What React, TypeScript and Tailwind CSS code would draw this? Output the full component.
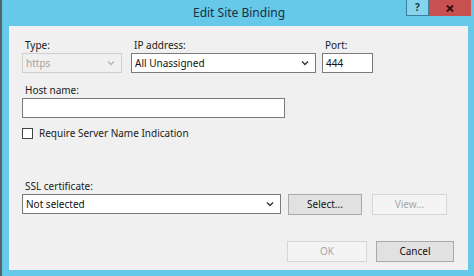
import React from "react";

const font = { fontFamily: '"Noto Sans", "Open Sans", sans-serif' };

function Chevron({ disabled }: { disabled?: boolean }) {
  return (
    <svg width="8" height="6" viewBox="0 0 8 6" className="shrink-0">
      <polyline
        points="1,1.5 4,4.5 7,1.5"
        fill="none"
        stroke={disabled ? "#b4b4b4" : "#333"}
        strokeWidth="1.4"
      />
    </svg>
  );
}

function Label({ children }: { children: React.ReactNode }) {
  return <div className="h-[14px] pl-[3px] text-[10px] leading-[14px] text-[#1a1a1a]">{children}</div>;
}

function Combo({ value, w, disabled }: { value: string; w: string; disabled?: boolean }) {
  return (
    <div
      className={`mt-[1px] flex h-[20px] ${w} items-center justify-between border pl-[3px] pr-[6px] text-[10px] ${
        disabled ? "border-[#cfcfcf] bg-[#f0f0f0] text-[#a3a3a3]" : "border-[#7a7a7a] bg-white text-[#111]"
      }`}
    >
      <span>{value}</span>
      <Chevron disabled={disabled} />
    </div>
  );
}

function Button({ children, w, disabled }: { children: React.ReactNode; w: string; disabled?: boolean }) {
  return (
    <div
      className={`flex h-[21px] ${w} items-center justify-center border text-[10px] ${
        disabled ? "border-[#d6d6d6] bg-[#f4f4f4] text-[#a8a8a8]" : "border-[#a9a9a9] bg-[#e1e1e1] text-[#111]"
      }`}
    >
      {children}
    </div>
  );
}

export default function App() {
  return (
    <div style={font} className="flex h-[276px] w-[474px] flex-col border-l-2 border-[#56646a] bg-[#66c9e9]">
      {/* title bar */}
      <div className="relative flex h-[26px] items-center justify-center">
        <span className="pb-[1px] pl-[2px] text-[12px] text-[#1c2f3c]">Edit Site Binding</span>
        <div className="absolute right-[3px] top-0 flex">
          <div className="flex h-[16px] w-[23px] items-center justify-center border border-t-0 border-[#3a7f9e] bg-[#86d3ee] text-[10px] font-bold text-[#15384a]">
            ?
          </div>
          <div className="flex h-[16px] w-[42px] items-center justify-center bg-[#c75050]">
            <svg width="8" height="7" viewBox="0 0 8 7">
              <path d="M1 0.5 L7 6.5 M7 0.5 L1 6.5" stroke="#2e0d0d" strokeWidth="1.8" />
            </svg>
          </div>
        </div>
      </div>

      {/* client area */}
      <div className="mb-[6px] ml-[7px] mr-[6px] flex flex-1 flex-col border-l border-[#f8f8f8] bg-[#f0f0f0] pl-[12px] pr-[14px] pt-[12px]">
        <div className="flex">
          <div className="flex flex-col">
            <Label>Type:</Label>
            <Combo value="https" w="w-[100px]" disabled />
          </div>
          <div className="ml-[9px] flex flex-col">
            <Label>IP address:</Label>
            <Combo value="All Unassigned" w="w-[185px]" />
          </div>
          <div className="ml-[6px] flex flex-col">
            <Label>Port:</Label>
            <div className="mt-[1px] flex h-[20px] w-[51px] items-center border border-[#7a7a7a] bg-white pl-[3px] text-[10px] text-[#111]">
              444
            </div>
          </div>
        </div>

        <div className="mt-[10px] flex flex-col">
          <Label>Host name:</Label>
          <div className="mt-[1px] h-[20px] w-[263px] border border-[#7a7a7a] bg-white" />
        </div>

        <div className="mt-[8px] flex items-center">
          <div className="h-[11px] w-[11px] border border-[#444] bg-white" />
          <span className="ml-[6px] text-[10px] leading-[14px] text-[#1a1a1a]">Require Server Name Indication</span>
        </div>

        <div className="mt-[39px] flex flex-col">
          <Label>SSL certificate:</Label>
          <div className="flex items-start">
            <Combo value="Not selected" w="w-[259px]" />
            <div className="ml-[7px] mt-[1px] flex gap-[10px]">
              <Button w="w-[74px]">Select...</Button>
              <Button w="w-[75px]" disabled>
                View...
              </Button>
            </div>
          </div>
        </div>

        <div className="mt-[26px] flex justify-end gap-[9px]">
          <Button w="w-[80px]" disabled>
            OK
          </Button>
          <Button w="w-[78px]">Cancel</Button>
        </div>
      </div>
    </div>
  );
}
